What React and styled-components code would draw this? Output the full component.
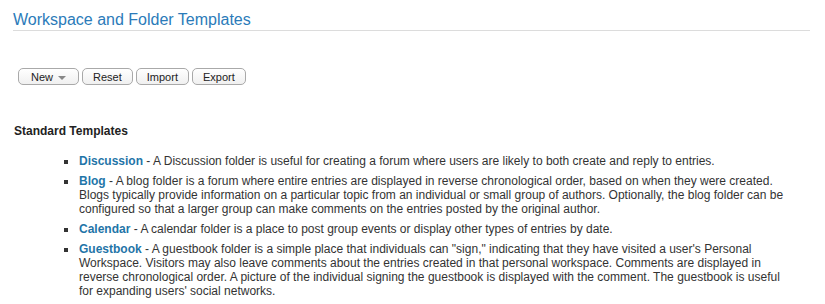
import React from "react";
import styled, { createGlobalStyle } from "styled-components";

const Global = createGlobalStyle`
  html, body { margin: 0; padding: 0; background: #fff; }
  body { font-family: "Liberation Sans", Arial, sans-serif; font-size: 12px; color: #333; }
`;

const Page = styled.div`
  padding: 10px 35px 0 13px;
`;

const Title = styled.h1`
  margin: 0 -20px 0 0;
  font-size: 16px;
  font-weight: normal;
  color: #2b7bb9;
  line-height: 20px;
  padding-bottom: 0;
  border-bottom: 1px solid #dcdcdc;
`;

const Toolbar = styled.div`
  display: flex;
  gap: 3px;
  margin: 37px 0 0 5px;
`;

const Button = styled.button`
  display: inline-flex;
  align-items: center;
  gap: 5px;
  height: 17px;
  padding: 0 ${(p) => p.$px || 10}px;
  border: 1px solid #a9a9a9;
  border-radius: 5px;
  background: linear-gradient(#ffffff, #f0f0f0);
  font-family: "Liberation Sans", Arial, sans-serif;
  font-size: 11px;
  color: #222;
  cursor: pointer;
`;

const Caret = styled.span`
  width: 0;
  height: 0;
  border-left: 4px solid transparent;
  border-right: 4px solid transparent;
  border-top: 4px solid #888;
  margin-top: 2px;
`;

const Section = styled.h2`
  margin: 39px 0 0 1px;
  font-size: 12px;
  font-weight: bold;
  color: #222;
  line-height: 14px;
`;

const List = styled.ul`
  margin: 16px 0 0;
  padding: 0 0 0 66px;
  list-style: none;
`;

const Item = styled.li`
  position: relative;
  line-height: 14px;
  margin-bottom: 6px;
  &::before {
    content: "";
    position: absolute;
    left: -15px;
    top: 6px;
    width: 4px;
    height: 4px;
    background: #333;
  }
`;

const Name = styled.a`
  color: #1f75a8;
  font-weight: bold;
  text-decoration: none;
`;

const items = [
  ["Discussion", "A Discussion folder is useful for creating a forum where users are likely to both create and reply to entries."],
  ["Blog", "A blog folder is a forum where entire entries are displayed in reverse chronological order, based on when they were created. Blogs typically provide information on a particular topic from an individual or small group of authors. Optionally, the blog folder can be configured so that a larger group can make comments on the entries posted by the original author."],
  ["Calendar", "A calendar folder is a place to post group events or display other types of entries by date."],
  ["Guestbook", "A guestbook folder is a simple place that individuals can \"sign,\" indicating that they have visited a user's Personal Workspace. Visitors may also leave comments about the entries created in that personal workspace. Comments are displayed in reverse chronological order. A picture of the individual signing the guestbook is displayed with the comment. The guestbook is useful for expanding users' social networks."],
];

export default function App() {
  return (
    <Page>
      <Global />
      <Title>Workspace and Folder Templates</Title>
      <Toolbar>
        <Button $px={12}>New <Caret /></Button>
        <Button>Reset</Button>
        <Button>Import</Button>
        <Button>Export</Button>
      </Toolbar>
      <Section>Standard Templates</Section>
      <List>
        {items.map(([n, t]) => (
          <Item key={n}>
            <Name href="#">{n}</Name> - {t}
          </Item>
        ))}
      </List>
    </Page>
  );
}
